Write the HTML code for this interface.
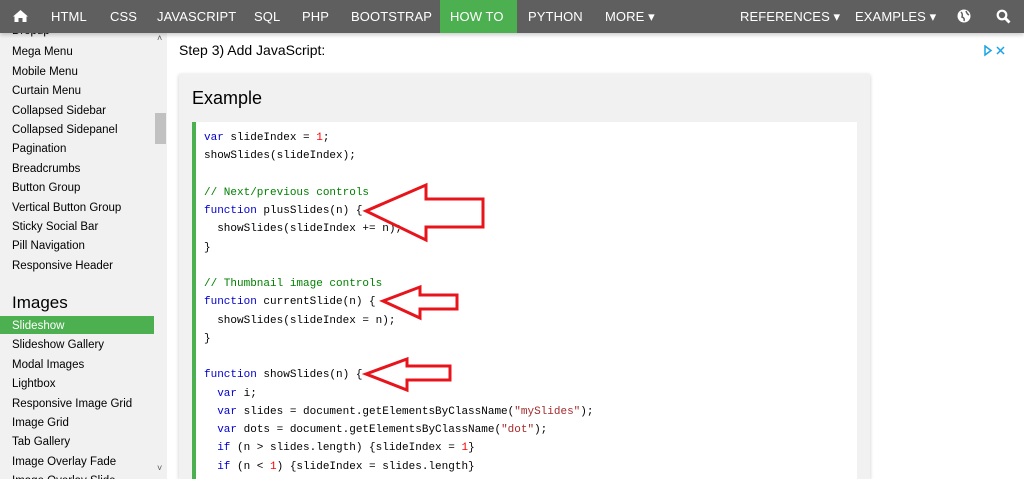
<!DOCTYPE html>
<html><head><meta charset="utf-8"><style>
*{margin:0;padding:0;box-sizing:border-box}
html,body{width:1024px;height:479px;overflow:hidden}
body{background:#fff;font-family:"Liberation Sans",sans-serif;position:relative}
#nav{position:absolute;left:0;top:0;width:1024px;height:33px;background:#5f5f5f;box-shadow:0 2px 4px rgba(0,0,0,.2);z-index:5}
#nav span{position:absolute;top:9px;color:#fff;font-size:13px;letter-spacing:.1px}
#how{position:absolute;left:440px;top:0;width:77px;height:33px;background:#4CAF50}
#side{position:absolute;left:0;top:33px;width:154px;height:446px;background:#f1f1f1;overflow:hidden}
#side div{position:absolute;left:12px;font-size:11.5px;color:#000;margin-top:2px}
#side div.hl{margin-top:0}
#sb{position:absolute;left:154px;top:33px;width:13px;height:446px;background:#f1f1f1}
#main{position:absolute;left:179px;top:74px;width:691px;height:405px;background:#f1f1f1;box-shadow:0 1px 4px rgba(0,0,0,.2)}
#code{position:absolute;left:192px;top:122px;width:665px;height:357px;background:#fff;border-left:4px solid #4CAF50}
pre{position:absolute;left:204px;top:129px;font-family:"Liberation Mono",monospace;font-size:11px;line-height:18.25px;color:#000}
.k{color:#0000cd}.n{color:red}.c{color:#008000}.s{color:#a52a2a}
</style></head><body>
<div id="nav">
<svg style="position:absolute;left:12px;top:9px" width="17" height="14" viewBox="0 0 17 14"><path d="M8.5 1 L1 7.5 L2.5 7.5 L2.5 13 L6.5 13 L6.5 9 L10.5 9 L10.5 13 L14.5 13 L14.5 7.5 L16 7.5 Z" fill="#fff"/></svg>
<span style="left:51px">HTML</span><span style="left:110px">CSS</span><span style="left:157px">JAVASCRIPT</span><span style="left:254px">SQL</span><span style="left:302px">PHP</span><span style="left:351px">BOOTSTRAP</span>
<div id="how"></div><span style="left:450px">HOW TO</span><span style="left:528px">PYTHON</span><span style="left:605px">MORE ▾</span>
<span style="left:740px">REFERENCES ▾</span><span style="left:855px">EXAMPLES ▾</span>
<svg style="position:absolute;left:957px;top:9px" width="14" height="14"><circle cx="7" cy="7" r="6.5" fill="#fff"/><path d="M4 3 Q6 5 5 8 Q8 9 7 12 M9 2 Q10 5 12 6" stroke="#5f5f5f" stroke-width="1.5" fill="none"/></svg>
<svg style="position:absolute;left:996px;top:9px" width="15" height="15"><circle cx="6" cy="6" r="4.3" stroke="#fff" stroke-width="2.2" fill="none"/><path d="M9 9 L13.5 13.5" stroke="#fff" stroke-width="2.8"/></svg>
</div>
<div id="side">
<div style="top:-10px">Dropup</div>
<div style="top:11px">Mega Menu</div><div style="top:31px">Mobile Menu</div><div style="top:50px">Curtain Menu</div><div style="top:70px">Collapsed Sidebar</div><div style="top:89px">Collapsed Sidepanel</div><div style="top:108px">Pagination</div><div style="top:128px">Breadcrumbs</div><div style="top:147px">Button Group</div><div style="top:167px">Vertical Button Group</div><div style="top:186px">Sticky Social Bar</div><div style="top:205px">Pill Navigation</div><div style="top:225px">Responsive Header</div>
<div style="top:258px;font-size:17px">Images</div>
<div class="hl" style="left:0;top:283px;width:154px;height:18px;background:#4CAF50"></div>
<div style="top:285px;color:#fff">Slideshow</div>
<div style="top:304px">Slideshow Gallery</div><div style="top:324px">Modal Images</div><div style="top:343px">Lightbox</div><div style="top:363px">Responsive Image Grid</div><div style="top:382px">Image Grid</div><div style="top:401px">Tab Gallery</div><div style="top:421px">Image Overlay Fade</div><div style="top:440px">Image Overlay Slide</div>
</div>
<div id="sb"><div style="position:absolute;left:1px;top:80px;width:11px;height:31px;background:#c1c1c1"></div><div style="position:absolute;left:3px;top:0;font-size:9px;color:#555">˄</div><div style="position:absolute;left:3px;top:430px;font-size:9px;color:#555">˅</div></div>
<div style="position:absolute;left:179px;top:42px;font-size:14px;color:#000">Step 3) Add JavaScript:</div>
<svg style="position:absolute;left:983px;top:45px" width="24" height="12"><path d="M2 1 L8 5.5 L2 10 Z" stroke="#1aa3e8" stroke-width="1.5" fill="none"/><path d="M14 2 L21 9 M21 2 L14 9" stroke="#1aa3e8" stroke-width="1.5"/></svg>
<div id="main"><div style="position:absolute;left:13px;top:14px;font-size:18px;color:#000">Example</div></div>
<div id="code"></div>
<pre><span class="k">var</span> slideIndex = <span class="n">1</span>;
showSlides(slideIndex);

<span class="c">// Next/previous controls</span>
<span class="k">function</span> plusSlides(n) {
  showSlides(slideIndex += n);
}

<span class="c">// Thumbnail image controls</span>
<span class="k">function</span> currentSlide(n) {
  showSlides(slideIndex = n);
}

<span class="k">function</span> showSlides(n) {
  <span class="k">var</span> i;
  <span class="k">var</span> slides = document.getElementsByClassName(<span class="s">"mySlides"</span>);
  <span class="k">var</span> dots = document.getElementsByClassName(<span class="s">"dot"</span>);
  <span class="k">if</span> (n &gt; slides.length) {slideIndex = <span class="n">1</span>}
  <span class="k">if</span> (n &lt; <span class="n">1</span>) {slideIndex = slides.length}</pre>
<svg style="position:absolute;left:0;top:0" width="1024" height="479">
<g fill="none" stroke="#e8141c" stroke-width="3" stroke-linejoin="miter">
<path d="M366 211 L426 185 L426 199 L483 199 L483 227 L426 227 L426 240 Z"/>
<path d="M383 301 L420 287 L420 295 L457 295 L457 309 L420 309 L420 318 Z"/>
<path d="M366 374 L407 359 L407 366 L450 366 L450 380 L407 380 L407 390 Z"/>
</g></svg>
</body></html>
